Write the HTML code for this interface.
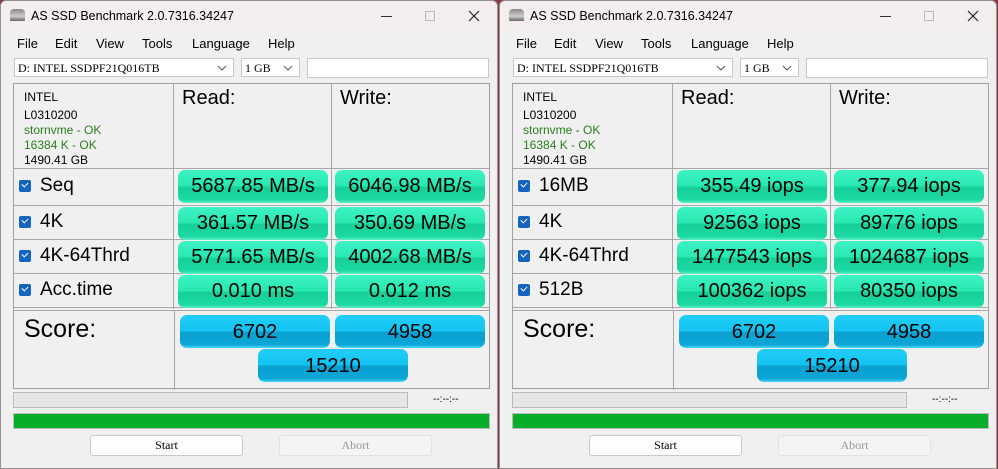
<!DOCTYPE html>
<html><head><meta charset="utf-8"><style>
*{margin:0;padding:0;box-sizing:border-box}
body{width:998px;height:469px;background:#8a3a44;position:relative;overflow:hidden;font-family:"Liberation Sans",Arial,sans-serif;color:#000}
.win{position:absolute;top:0;width:498px;height:469px;background:#f0f0f0;border:1px solid #9a8f90;border-radius:6px 6px 0 0;overflow:hidden}
.tb{position:absolute;left:0;top:0;width:100%;height:30px;background:#f4eeee}
.ab{position:absolute}
.t{position:absolute;white-space:nowrap}
.title{left:30px;top:8px;font-size:12.5px}
.ico{left:9px;top:8px;width:15px;height:12px;background:linear-gradient(#888,#ccc 60%,#666);border-radius:4px 4px 1px 1px}
.menu{top:35px;font-size:13px}
.combo{top:57px;height:19px;background:#fff;border:1px solid #c8c8c8;font-family:"Liberation Serif",serif;font-size:12px;padding:2px 0 0 3px}
.combo svg{position:absolute;right:6px;top:6px}
.grid{left:12px;top:82px;width:477px;height:306px;border:1px solid #a0a0a0}
.hl{position:absolute;height:1px;background:#a8a8a8}
.vl{position:absolute;width:1px;background:#a8a8a8}
.info{left:10px;font-size:12px}
.g{color:#2a7d1e}
.hdr{top:3px;font-size:20px}
.cb{position:absolute;left:5px;width:12px;height:12px;background:#1565c0;border-radius:2px}
.cb:after{content:"";position:absolute;left:3px;top:2px;width:5px;height:3px;border-left:1.5px solid #fff;border-bottom:1.5px solid #fff;transform:rotate(-45deg)}
.lbl{left:26px;font-size:19px}
.gb{position:absolute;width:150px;height:33px;border-radius:7px;background:linear-gradient(#3ff2c4 0%,#28e8b2 48%,#17cf98 52%,#1bd9a2 90%,#5ff0c8 100%);font-size:20px;text-align:center;line-height:33px}
.bb{position:absolute;width:150px;height:33px;border-radius:7px;background:linear-gradient(#22cdf7 0%,#13c3f2 48%,#0aa0d0 52%,#0ba6d7 90%,#4bd8fb 100%);font-size:20px;text-align:center;line-height:34px}
.btn{position:absolute;top:434px;width:153px;height:21px;border:1px solid #c8c8c8;border-radius:3px;background:#fdfdfd;font-family:"Liberation Serif",serif;font-size:12px;text-align:center;line-height:19px}
</style></head><body>

<!-- LEFT WINDOW -->
<div class="win" style="left:0">
 <div class="tb"></div>
 <div class="ab ico"></div>
 <div class="t title">AS SSD Benchmark 2.0.7316.34247</div>
 <div class="ab" style="left:380px;top:15px;width:11px;height:1px;background:#333"></div>
 <div class="ab" style="left:424px;top:10px;width:10px;height:10px;border:1px solid #bbb"></div>
 <svg class="ab" style="left:467px;top:9px" width="12" height="12"><path d="M1 1L11 11M11 1L1 11" stroke="#222" stroke-width="1.2"/></svg>
 <div class="t menu" style="left:16px">File</div>
 <div class="t menu" style="left:54px">Edit</div>
 <div class="t menu" style="left:95px">View</div>
 <div class="t menu" style="left:141px">Tools</div>
 <div class="t menu" style="left:191px">Language</div>
 <div class="t menu" style="left:267px">Help</div>
 <div class="ab combo" style="left:13px;width:220px">D: INTEL SSDPF21Q016TB<svg width="10" height="6"><path d="M1 1L5 5L9 1" stroke="#555" fill="none"/></svg></div>
 <div class="ab combo" style="left:240px;width:59px">1 GB<svg width="10" height="6"><path d="M1 1L5 5L9 1" stroke="#555" fill="none"/></svg></div>
 <div class="ab combo" style="left:306px;width:182px;height:20px"></div>
 <div class="ab grid">
  <div class="vl" style="left:159px;top:0;height:225px"></div>
  <div class="vl" style="left:317px;top:0;height:225px"></div>
  <div class="hl" style="left:0;top:84px;width:100%"></div>
  <div class="hl" style="left:0;top:121px;width:100%"></div>
  <div class="hl" style="left:0;top:155px;width:100%"></div>
  <div class="hl" style="left:0;top:189px;width:100%"></div>
  <div class="hl" style="left:0;top:223px;width:100%"></div>
  <div class="hl" style="left:0;top:226px;width:100%"></div>
  <div class="vl" style="left:160px;top:226px;height:80px"></div>
  <div class="t info" style="top:6px">INTEL</div>
  <div class="t info" style="top:24px">L0310200</div>
  <div class="t info g" style="top:39px">stornvme - OK</div>
  <div class="t info g" style="top:54px">16384 K - OK</div>
  <div class="t info" style="top:69px">1490.41 GB</div>
  <div class="t hdr" style="left:168px">Read:</div>
  <div class="t hdr" style="left:326px">Write:</div>
  <div class="cb" style="top:96px"></div><div class="t lbl" style="top:91px">Seq</div>
  <div class="cb" style="top:132px"></div><div class="t lbl" style="top:127px">4K</div>
  <div class="cb" style="top:166px"></div><div class="t lbl" style="top:161px">4K-64Thrd</div>
  <div class="cb" style="top:200px"></div><div class="t lbl" style="top:195px">Acc.time</div>
  <div class="gb" style="left:164px;top:86px">5687.85 MB/s</div>
  <div class="gb" style="left:321px;top:86px">6046.98 MB/s</div>
  <div class="gb" style="left:164px;top:123px">361.57 MB/s</div>
  <div class="gb" style="left:321px;top:123px">350.69 MB/s</div>
  <div class="gb" style="left:164px;top:157px">5771.65 MB/s</div>
  <div class="gb" style="left:321px;top:157px">4002.68 MB/s</div>
  <div class="gb" style="left:164px;top:191px">0.010 ms</div>
  <div class="gb" style="left:321px;top:191px">0.012 ms</div>
  <div class="t" style="left:10px;top:231px;font-size:25px">Score:</div>
  <div class="bb" style="left:166px;top:231px">6702</div>
  <div class="bb" style="left:321px;top:231px">4958</div>
  <div class="bb" style="left:244px;top:265px">15210</div>
 </div>
 <div class="ab" style="left:12px;top:391px;width:395px;height:16px;background:#e6e6e6;border:1px solid #bcbcbc"></div>
 <div class="t" style="left:432px;top:393px;font-size:10px">--:--:--</div>
 <div class="ab" style="left:12px;top:412px;width:477px;height:16px;background:#08ad2a;border:1px solid #bcbcbc"></div>
 <div class="btn" style="left:89px">Start</div>
 <div class="btn" style="left:278px;color:#999;background:#f4f4f4;border-color:#e2e2e2">Abort</div>
</div>

<!-- RIGHT WINDOW -->
<div class="win" style="left:499px">
 <div class="tb"></div>
 <div class="ab ico"></div>
 <div class="t title">AS SSD Benchmark 2.0.7316.34247</div>
 <div class="ab" style="left:380px;top:15px;width:11px;height:1px;background:#333"></div>
 <div class="ab" style="left:424px;top:10px;width:10px;height:10px;border:1px solid #bbb"></div>
 <svg class="ab" style="left:467px;top:9px" width="12" height="12"><path d="M1 1L11 11M11 1L1 11" stroke="#222" stroke-width="1.2"/></svg>
 <div class="t menu" style="left:16px">File</div>
 <div class="t menu" style="left:54px">Edit</div>
 <div class="t menu" style="left:95px">View</div>
 <div class="t menu" style="left:141px">Tools</div>
 <div class="t menu" style="left:191px">Language</div>
 <div class="t menu" style="left:267px">Help</div>
 <div class="ab combo" style="left:13px;width:220px">D: INTEL SSDPF21Q016TB<svg width="10" height="6"><path d="M1 1L5 5L9 1" stroke="#555" fill="none"/></svg></div>
 <div class="ab combo" style="left:240px;width:59px">1 GB<svg width="10" height="6"><path d="M1 1L5 5L9 1" stroke="#555" fill="none"/></svg></div>
 <div class="ab combo" style="left:306px;width:182px;height:20px"></div>
 <div class="ab grid">
  <div class="vl" style="left:159px;top:0;height:225px"></div>
  <div class="vl" style="left:317px;top:0;height:225px"></div>
  <div class="hl" style="left:0;top:84px;width:100%"></div>
  <div class="hl" style="left:0;top:121px;width:100%"></div>
  <div class="hl" style="left:0;top:155px;width:100%"></div>
  <div class="hl" style="left:0;top:189px;width:100%"></div>
  <div class="hl" style="left:0;top:223px;width:100%"></div>
  <div class="hl" style="left:0;top:226px;width:100%"></div>
  <div class="vl" style="left:160px;top:226px;height:80px"></div>
  <div class="t info" style="top:6px">INTEL</div>
  <div class="t info" style="top:24px">L0310200</div>
  <div class="t info g" style="top:39px">stornvme - OK</div>
  <div class="t info g" style="top:54px">16384 K - OK</div>
  <div class="t info" style="top:69px">1490.41 GB</div>
  <div class="t hdr" style="left:168px">Read:</div>
  <div class="t hdr" style="left:326px">Write:</div>
  <div class="cb" style="top:96px"></div><div class="t lbl" style="top:91px">16MB</div>
  <div class="cb" style="top:132px"></div><div class="t lbl" style="top:127px">4K</div>
  <div class="cb" style="top:166px"></div><div class="t lbl" style="top:161px">4K-64Thrd</div>
  <div class="cb" style="top:200px"></div><div class="t lbl" style="top:195px">512B</div>
  <div class="gb" style="left:164px;top:86px">355.49 iops</div>
  <div class="gb" style="left:321px;top:86px">377.94 iops</div>
  <div class="gb" style="left:164px;top:123px">92563 iops</div>
  <div class="gb" style="left:321px;top:123px">89776 iops</div>
  <div class="gb" style="left:164px;top:157px">1477543 iops</div>
  <div class="gb" style="left:321px;top:157px">1024687 iops</div>
  <div class="gb" style="left:164px;top:191px">100362 iops</div>
  <div class="gb" style="left:321px;top:191px">80350 iops</div>
  <div class="t" style="left:10px;top:231px;font-size:25px">Score:</div>
  <div class="bb" style="left:166px;top:231px">6702</div>
  <div class="bb" style="left:321px;top:231px">4958</div>
  <div class="bb" style="left:244px;top:265px">15210</div>
 </div>
 <div class="ab" style="left:12px;top:391px;width:395px;height:16px;background:#e6e6e6;border:1px solid #bcbcbc"></div>
 <div class="t" style="left:432px;top:393px;font-size:10px">--:--:--</div>
 <div class="ab" style="left:12px;top:412px;width:477px;height:16px;background:#08ad2a;border:1px solid #bcbcbc"></div>
 <div class="btn" style="left:89px">Start</div>
 <div class="btn" style="left:278px;color:#999;background:#f4f4f4;border-color:#e2e2e2">Abort</div>
</div>
</body></html>
